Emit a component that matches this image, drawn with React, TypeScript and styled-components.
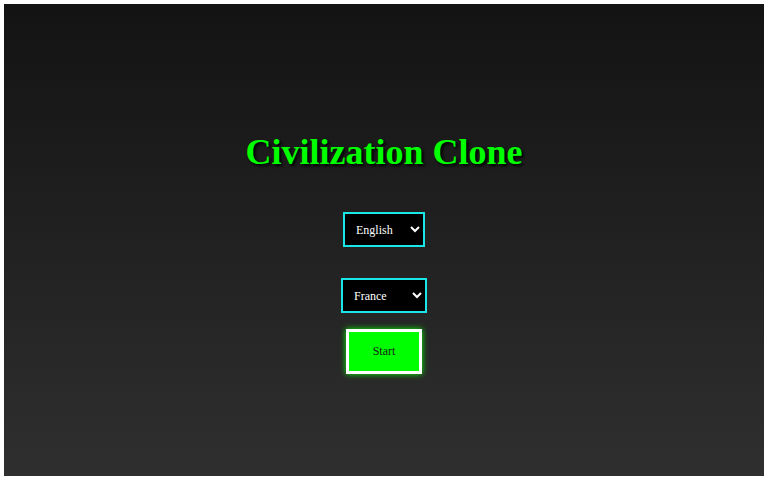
import React, { useState } from 'react';
import styled, { createGlobalStyle } from 'styled-components';


// Global
const GlobalStyle = createGlobalStyle`
  html, body {
    margin: 0;
    padding: 0;
    background: #ffffff;
  }
  body {
    padding: 4px;
    font-family: "Liberation Serif", "Times New Roman", serif;
  }
`;


// CSS in JS
const Screen = styled.main`
  height: 472px;
  display: flex;
  flex-direction: column;
  align-items: center;
  background: linear-gradient(to bottom, #131313, #2f2f2f);
`;

const Title = styled.h1`
  margin: 122px 0 34px;
  font-size: 36px;
  line-height: 52px;
  font-weight: bold;
  color: #00ff00;
  text-shadow: 2px 2px 3px #000000;
`;

const Picker = styled.select<{ $gap: number }>`
  margin-bottom: ${(props) => props.$gap}px;
  height: 35px;
  padding: 0 10px 0 7px;
  border: 2px solid #19e6e6;
  border-radius: 0;
  background: #000000;
  color: #ffffff;
  font-family: "Liberation Serif", serif;
  font-size: 12px;
  outline: none;
`;

const StartButton = styled.button`
  width: 76px;
  height: 45px;
  border: 3px solid #ffffff;
  background: #00ff00;
  color: #1a1a1a;
  font-family: "Liberation Serif", serif;
  font-size: 12px;
  box-shadow: 0 0 6px #00ff00;
  cursor: pointer;
`;


const languages = ['English', 'Français', 'Deutsch'];
const nations = ['France', 'Germany', 'England', 'Rome', 'China'];


// Start menu
const App = () => {
  const [language, setLanguage] = useState('English');
  const [nation, setNation] = useState('France');

  return (
    <>
      <GlobalStyle />
      <Screen>
        <Title>Civilization Clone</Title>
        <Picker $gap={31} value={language} onChange={(e) => setLanguage(e.target.value)}>
          {languages.map((data) => <option key={data} value={data}>{data}</option>)}
        </Picker>
        <Picker $gap={16} value={nation} onChange={(e) => setNation(e.target.value)}>
          {nations.map((data) => <option key={data} value={data}>{data}</option>)}
        </Picker>
        <StartButton>Start</StartButton>
      </Screen>
    </>
  );
};

export default App;
